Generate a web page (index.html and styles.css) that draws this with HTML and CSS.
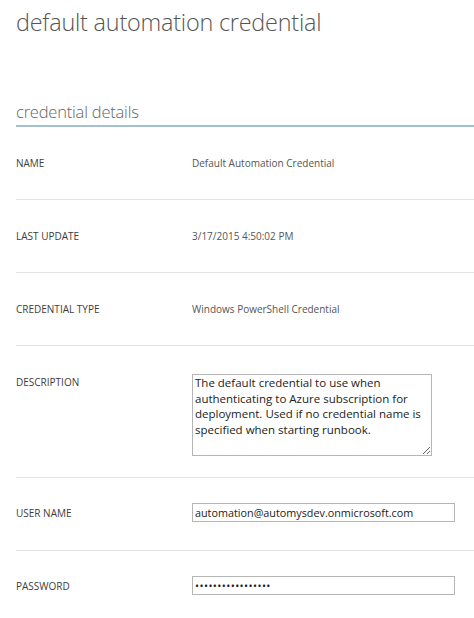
FILE: index.html
```html
<!DOCTYPE html>
<html>
<head>
<meta charset="utf-8">
<link rel="stylesheet" href="styles.css">
</head>
<body>
<div class="page">
  <h1 class="title">default automation credential</h1>
  <h2 class="section">credential details</h2>
  <div class="row">
    <div class="label">NAME</div>
    <div class="value">Default Automation Credential</div>
  </div>
  <div class="row">
    <div class="label">LAST UPDATE</div>
    <div class="value">3/17/2015 4:50:02 PM</div>
  </div>
  <div class="row">
    <div class="label">CREDENTIAL TYPE</div>
    <div class="value">Windows PowerShell Credential</div>
  </div>
  <div class="row row-desc">
    <div class="label">DESCRIPTION</div>
    <div class="value"><textarea class="desc">The default credential to use when
authenticating to Azure subscription for
deployment. Used if no credential name is
specified when starting runbook.</textarea></div>
  </div>
  <div class="row row-input">
    <div class="label">USER NAME</div>
    <div class="value"><input class="field" type="text" value="automation@automysdev.onmicrosoft.com"></div>
  </div>
  <div class="row row-input">
    <div class="label">PASSWORD</div>
    <div class="value"><input class="field field-pass" type="password" value="xxxxxxxxxxxxxxxxx"></div>
  </div>
</div>
</body>
</html>
```

FILE: styles.css
```css
html, body {
  margin: 0;
  padding: 0;
  background: #ffffff;
}
.page {
  padding-left: 16px;
  font-family: "Open Sans", "Noto Sans", sans-serif;
  color: #555;
}
.title {
  margin: 0;
  padding-top: 6px;
  font-size: 23.4px;
  font-weight: 300;
  line-height: 32px;
  color: #555;
  letter-spacing: -0.2px;
}
.section {
  margin: 62px 0 0 0;
  font-size: 16.5px;
  font-weight: 300;
  line-height: 24px;
  color: #666;
  padding-bottom: 1px;
  border-bottom: 2px solid #a3c0cf;
  letter-spacing: -0.2px;
}
.row {
  display: grid;
  grid-template-columns: 176px 1fr;
  align-items: start;
  padding: 28px 0;
  border-bottom: 1px solid #e3e3e3;
}
.label {
  font-size: 10px;
  line-height: 16px;
  color: #3d3d3d;
}
.value {
  font-size: 10px;
  line-height: 16px;
  color: #555;
}
.row-desc {
  padding-bottom: 21px;
}
.row-input {
  align-items: center;
  padding: 25px 0 28px;
}
.desc {
  display: block;
  box-sizing: border-box;
  width: 240px;
  height: 82px;
  margin: 0;
  padding: 0 2px;
  border: 1px solid #b5b5b5;
  font-family: "Open Sans", "Noto Sans", sans-serif;
  font-size: 11.5px;
  line-height: 15.5px;
  color: #222;
  resize: both;
  overflow: hidden;
}
.field {
  display: block;
  box-sizing: border-box;
  width: 263px;
  height: 19px;
  margin: 0;
  padding: 0 2px;
  border: 1px solid #b5b5b5;
  font-family: "Open Sans", "Noto Sans", sans-serif;
  font-size: 10.8px;
  color: #222;
  outline: none;
}
.field-pass {
  letter-spacing: 0.4px;
}
```
